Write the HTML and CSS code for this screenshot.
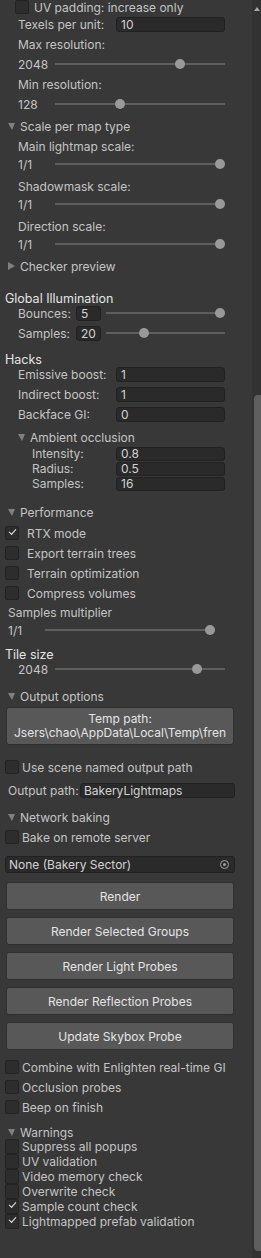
FILE: index.html
```html
<!DOCTYPE html>
<html lang="en">

    <head>
        <meta charset="UTF-8">
        <meta name="viewport" content="width=device-width, initial-scale=1.0">
        <title>Bakery Settings</title>
        <link rel="stylesheet" href="styles.css">
    </head>

    <body>

        <div class="inspector">
            <div class="panel">

                <div class="row check-row first">
                    <span class="checkbox"></span>
                    <span class="text">UV padding: increase only</span>
                </div>
                <div class="row field-row indent tight-top">
                    <span class="label">Texels per unit:</span>
                    <span class="field">10</span>
                </div>
                <div class="row indent"><span class="label">Max resolution:</span></div>
                <div class="row slider indent">
                    <span class="value">2048</span>
                    <div class="track"><span class="thumb" style="left: 73.5%"></span></div>
                </div>
                <div class="row indent"><span class="label">Min resolution:</span></div>
                <div class="row slider indent">
                    <span class="value">128</span>
                    <div class="track"><span class="thumb" style="left: 38%"></span></div>
                </div>

                <div class="row foldout open gap-2"><span class="arrow"></span>Scale per map type</div>
                <div class="row indent"><span class="label">Main lightmap scale:</span></div>
                <div class="row slider indent pull-2">
                    <span class="value">1/1</span>
                    <div class="track"><span class="thumb" style="left: 97%"></span></div>
                </div>
                <div class="row indent gap-2"><span class="label">Shadowmask scale:</span></div>
                <div class="row slider indent pull-2">
                    <span class="value">1/1</span>
                    <div class="track"><span class="thumb" style="left: 97%"></span></div>
                </div>
                <div class="row indent gap-2"><span class="label">Direction scale:</span></div>
                <div class="row slider indent pull-2">
                    <span class="value">1/1</span>
                    <div class="track"><span class="thumb" style="left: 97%"></span></div>
                </div>
                <div class="row foldout gap-2"><span class="arrow"></span>Checker preview</div>

                <!-- Global Illumination -->
                <div class="row header gap-12">Global Illumination</div>
                <div class="row small-field indent pull-5">
                    <span class="label short">Bounces:</span>
                    <span class="field small">5</span>
                    <div class="track"><span class="thumb" style="left: 96%"></span></div>
                </div>
                <div class="row small-field indent">
                    <span class="label short">Samples:</span>
                    <span class="field small">20</span>
                    <div class="track"><span class="thumb" style="left: 32%"></span></div>
                </div>

                <!-- Hacks -->
                <div class="row header gap-6">Hacks</div>
                <div class="row field-row indent pull-5">
                    <span class="label">Emissive boost:</span>
                    <span class="field">1</span>
                </div>
                <div class="row field-row indent">
                    <span class="label">Indirect boost:</span>
                    <span class="field">1</span>
                </div>
                <div class="row field-row indent">
                    <span class="label">Backface GI:</span>
                    <span class="field">0</span>
                </div>
                <div class="row foldout open sub gap-3"><span class="arrow"></span>Ambient occlusion</div>
                <div class="row compact field-row deep pull-1">
                    <span class="label">Intensity:</span>
                    <span class="field">0.8</span>
                </div>
                <div class="row compact field-row deep">
                    <span class="label">Radius:</span>
                    <span class="field">0.5</span>
                </div>
                <div class="row compact field-row deep">
                    <span class="label">Samples:</span>
                    <span class="field">16</span>
                </div>

                <!-- Performance -->
                <div class="row foldout open gap-11"><span class="arrow"></span>Performance</div>
                <div class="row check-row wide gap-1">
                    <span class="checkbox checked"></span>
                    <span class="text">RTX mode</span>
                </div>
                <div class="row check-row wide">
                    <span class="checkbox"></span>
                    <span class="text">Export terrain trees</span>
                </div>
                <div class="row check-row wide">
                    <span class="checkbox"></span>
                    <span class="text">Terrain optimization</span>
                </div>
                <div class="row check-row wide">
                    <span class="checkbox"></span>
                    <span class="text">Compress volumes</span>
                </div>
                <div class="row label-row pull-1"><span class="label">Samples multiplier</span></div>
                <div class="row slider short-track pull-2">
                    <span class="value">1/1</span>
                    <div class="track"><span class="thumb" style="left: 97%"></span></div>
                </div>

                <div class="row header gap-4">Tile size</div>
                <div class="row slider indent pull-5">
                    <span class="value">2048</span>
                    <div class="track"><span class="thumb" style="left: 83.5%"></span></div>
                </div>

                <!-- Output -->
                <div class="row foldout open gap-7"><span class="arrow"></span>Output options</div>
                <button class="button path-button">
                    <span>Temp path:</span>
                    <span class="path">Jsers\chao\AppData\Local\Temp\fren</span>
                </button>
                <div class="row check-row narrow gap-12">
                    <span class="checkbox"></span>
                    <span class="text">Use scene named output path</span>
                </div>
                <div class="row output-row gap-3">
                    <span class="label">Output path:</span>
                    <span class="field">BakeryLightmaps</span>
                </div>

                <div class="row foldout open gap-7"><span class="arrow"></span>Network baking</div>
                <div class="row check-row narrow">
                    <span class="checkbox"></span>
                    <span class="text">Bake on remote server</span>
                </div>

                <div class="object-field">
                    <span>None (Bakery Sector)</span>
                    <span class="picker"></span>
                </div>

                <button class="button">Render</button>
                <button class="button">Render Selected Groups</button>
                <button class="button">Render Light Probes</button>
                <button class="button">Render Reflection Probes</button>
                <button class="button">Update Skybox Probe</button>

                <div class="row check-row narrow gap-7">
                    <span class="checkbox"></span>
                    <span class="text">Combine with Enlighten real-time GI</span>
                </div>
                <div class="row check-row narrow">
                    <span class="checkbox"></span>
                    <span class="text">Occlusion probes</span>
                </div>
                <div class="row check-row narrow">
                    <span class="checkbox"></span>
                    <span class="text">Beep on finish</span>
                </div>

                <!-- Warnings -->
                <div class="row foldout open gap-5"><span class="arrow"></span>Warnings</div>
                <div class="warnings">
                    <div class="check-row narrow">
                        <span class="checkbox"></span>
                        <span class="text">Suppress all popups</span>
                    </div>
                    <div class="check-row narrow">
                        <span class="checkbox"></span>
                        <span class="text">UV validation</span>
                    </div>
                    <div class="check-row narrow">
                        <span class="checkbox"></span>
                        <span class="text">Video memory check</span>
                    </div>
                    <div class="check-row narrow">
                        <span class="checkbox"></span>
                        <span class="text">Overwrite check</span>
                    </div>
                    <div class="check-row narrow">
                        <span class="checkbox checked"></span>
                        <span class="text">Sample count check</span>
                    </div>
                    <div class="check-row narrow">
                        <span class="checkbox checked"></span>
                        <span class="text">Lightmapped prefab validation</span>
                    </div>
                </div>

            </div>

            <div class="scrollbar">
                <span class="scroll-arrow"></span>
                <span class="scroll-thumb"></span>
            </div>
        </div>

    </body>

</html>
```

FILE: styles.css
```css
body {
    font-family: Inter, 'Noto Sans', sans-serif;
    font-size: 12px;
    background-color: #383838;
    color: #c4c4c4;
    margin: 0;
    padding: 0;
    height: 1258px;
    overflow: hidden;
}

.inspector {
    display: flex;
    height: 100%;
}

.panel {
    width: 252px;
    flex-shrink: 0;
}

.row {
    height: 20px;
    display: flex;
    align-items: center;
    white-space: nowrap;
}

.row.compact {
    height: 15px;
}

.first {
    margin-top: -3px;
}

.tight-top { margin-top: -3px; }
.pull-1 { margin-top: -1px; }
.pull-2 { margin-top: -2px; }
.pull-5 { margin-top: -5px; }
.gap-1 { margin-top: 1px; }
.gap-2 { margin-top: 2px; }
.gap-3 { margin-top: 3px; }
.gap-4 { margin-top: 4px; }
.gap-5 { margin-top: 5px; }
.gap-6 { margin-top: 6px; }
.gap-7 { margin-top: 7px; }
.gap-11 { margin-top: 11px; }
.gap-12 { margin-top: 12px; }

.indent {
    padding-left: 18px;
}

.deep {
    padding-left: 32px;
}

.header {
    padding-left: 5px;
    color: #e4e4e4;
    font-size: 12.5px;
}

.label-row {
    padding-left: 8px;
}

/* foldouts */
.foldout {
    padding-left: 8px;
}

.foldout.sub {
    padding-left: 18px;
}

.arrow {
    width: 0;
    height: 0;
    margin-right: 5px;
    border-top: 4px solid transparent;
    border-bottom: 4px solid transparent;
    border-left: 7px solid #808080;
}

.foldout.open .arrow {
    border-left: 4px solid transparent;
    border-right: 3px solid transparent;
    border-top: 7px solid #808080;
    border-bottom: none;
    margin-top: 1px;
    margin-right: 5px;
}

/* checkboxes */
.check-row {
    display: flex;
    align-items: center;
    padding-left: 15px;
}

.check-row.wide,
.check-row.narrow {
    padding-left: 5px;
}

.checkbox {
    width: 12px;
    height: 12px;
    border: 1px solid #232323;
    border-radius: 2px;
    background-color: #2d2d2d;
    margin-right: 5px;
    flex-shrink: 0;
    position: relative;
}

.check-row.wide .checkbox {
    margin-right: 8px;
}

.check-row.narrow .checkbox {
    margin-right: 3px;
}

.checkbox.checked::after {
    content: '';
    position: absolute;
    left: 3px;
    top: 2px;
    width: 6px;
    height: 3px;
    border-left: 1.5px solid #e6e6e6;
    border-bottom: 1.5px solid #e6e6e6;
    transform: rotate(-48deg);
}

/* text fields */
.field-row .label {
    width: 98px;
    flex-shrink: 0;
}

.deep.field-row .label {
    width: 84px;
}

.field {
    flex: 1;
    height: 13px;
    line-height: 13px;
    margin-right: 27px;
    padding-left: 4px;
    background-color: #2a2a2a;
    border: 1px solid #212121;
    border-radius: 3px;
    color: #d2d2d2;
}

.compact .field {
    height: 12px;
    line-height: 12px;
}

.output-row {
    padding-left: 8px;
}

.output-row .label {
    width: 72px;
}

.output-row .field {
    margin-right: 17px;
    padding-left: 3px;
}

/* sliders */
.slider .value {
    width: 37px;
    flex-shrink: 0;
}

.short-track {
    padding-left: 8px;
}

.short-track .track {
    margin-right: 37px;
}

.track {
    flex: 1;
    height: 2px;
    margin-right: 27px;
    background-color: #5e5e5e;
    position: relative;
}

.thumb {
    position: absolute;
    top: -4px;
    width: 10px;
    height: 10px;
    border-radius: 50%;
    background-color: #999;
    transform: translateX(-50%);
}

.small-field .label {
    width: 58px;
}

.field.small {
    flex: 0 0 19px;
    margin-right: 5px;
}

/* object field and buttons */
.object-field {
    display: flex;
    justify-content: space-between;
    align-items: center;
    height: 15px;
    margin: 9px 17px 0 5px;
    padding-left: 3px;
    background-color: #2a2a2a;
    border: 1px solid #212121;
    border-radius: 3px;
    color: #d2d2d2;
}

.picker {
    width: 7px;
    height: 7px;
    margin-right: 5px;
    border: 1px solid #a0a0a0;
    border-radius: 50%;
    position: relative;
}

.picker::after {
    content: '';
    position: absolute;
    left: 2px;
    top: 2px;
    width: 3px;
    height: 3px;
    border-radius: 50%;
    background-color: #a0a0a0;
}

.button {
    display: block;
    width: 228px;
    height: 28px;
    margin: 7px 0 0 6px;
    padding: 0;
    background-color: #585858;
    border: 1px solid #303030;
    border-radius: 3px;
    color: #e4e4e4;
    font-family: inherit;
    font-size: 12px;
}

.object-field + .button {
    margin-top: 9px;
}

.path-button {
    height: 38px;
    margin-top: 1px;
    display: flex;
    flex-direction: column;
    align-items: center;
    justify-content: center;
    line-height: 14px;
    white-space: nowrap;
}

.warnings {
    margin-top: -3px;
}

.warnings .check-row {
    height: 15px;
}

.warnings .checkbox {
    height: 13px;
}

/* scrollbar */
.scrollbar {
    width: 9px;
    background-color: #323232;
    display: flex;
    flex-direction: column;
    align-items: flex-end;
}

.scroll-arrow {
    width: 0;
    height: 0;
    margin: 7px 1px 0 0;
    border-left: 3px solid transparent;
    border-right: 3px solid transparent;
    border-bottom: 4px solid #a8a8a8;
}

.scroll-thumb {
    width: 7px;
    height: 856px;
    margin-top: 384px;
    background-color: #5f5f5f;
    border-radius: 4px 0 0 4px;
}
```
